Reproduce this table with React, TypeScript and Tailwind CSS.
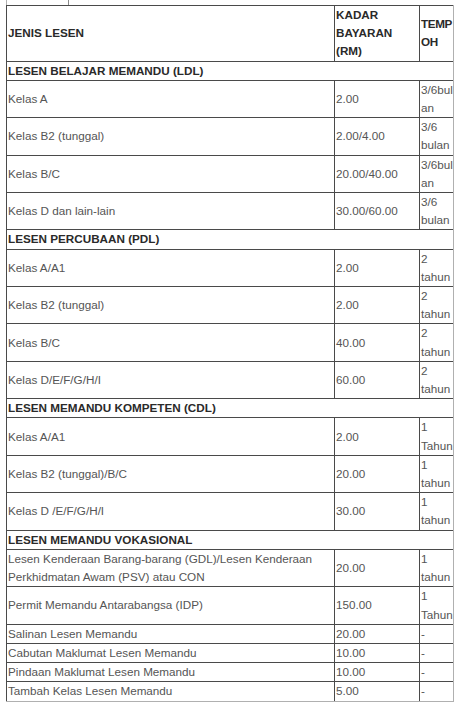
import React from "react";

type Row =
  | { kind: "section"; title: string }
  | { kind: "item"; name: React.ReactNode; fee: string; period: string[] };

const ROWS: Row[] = [
  { kind: "section", title: "LESEN BELAJAR MEMANDU (LDL)" },
  { kind: "item", name: "Kelas A", fee: "2.00", period: ["3/6bul", "an"] },
  { kind: "item", name: "Kelas B2 (tunggal)", fee: "2.00/4.00", period: ["3/6", "bulan"] },
  { kind: "item", name: "Kelas B/C", fee: "20.00/40.00", period: ["3/6bul", "an"] },
  { kind: "item", name: "Kelas D dan lain-lain", fee: "30.00/60.00", period: ["3/6", "bulan"] },
  { kind: "section", title: "LESEN PERCUBAAN (PDL)" },
  { kind: "item", name: "Kelas A/A1", fee: "2.00", period: ["2", "tahun"] },
  { kind: "item", name: "Kelas B2 (tunggal)", fee: "2.00", period: ["2", "tahun"] },
  { kind: "item", name: "Kelas B/C", fee: "40.00", period: ["2", "tahun"] },
  { kind: "item", name: "Kelas D/E/F/G/H/I", fee: "60.00", period: ["2", "tahun"] },
  { kind: "section", title: "LESEN MEMANDU KOMPETEN (CDL)" },
  { kind: "item", name: "Kelas A/A1", fee: "2.00", period: ["1", "Tahun"] },
  { kind: "item", name: "Kelas B2 (tunggal)/B/C", fee: "20.00", period: ["1", "tahun"] },
  { kind: "item", name: "Kelas D /E/F/G/H/I", fee: "30.00", period: ["1", "tahun"] },
  { kind: "section", title: "LESEN MEMANDU VOKASIONAL" },
  {
    kind: "item",
    name: (
      <>
        Lesen Kenderaan Barang-barang (GDL)/Lesen Kenderaan
        <br />
        Perkhidmatan Awam (PSV) atau CON
      </>
    ),
    fee: "20.00",
    period: ["1", "tahun"],
  },
  { kind: "item", name: "Permit Memandu Antarabangsa (IDP)", fee: "150.00", period: ["1", "Tahun"] },
  { kind: "item", name: "Salinan Lesen Memandu", fee: "20.00", period: ["-"] },
  { kind: "item", name: "Cabutan Maklumat Lesen Memandu", fee: "10.00", period: ["-"] },
  { kind: "item", name: "Pindaan Maklumat Lesen Memandu", fee: "10.00", period: ["-"] },
  { kind: "item", name: "Tambah Kelas Lesen Memandu", fee: "5.00", period: ["-"] },
];

const cell = "border-t border-l border-[#4a4a4a] pl-px pr-0 py-0 align-middle";

export default function App() {
  return (
    <div
      className="w-[474px] h-[715px] bg-white text-[11.7px] leading-[18.2px] text-[#555]"
      style={{ fontFamily: '"Liberation Sans", Arial, sans-serif' }}
    >
      {/* tail of the previous table */}
      <div className="ml-[6px] h-[5px] w-[63px] border-l border-r border-l-[#b0b0b0] border-r-[#8a8a8a]" />

      <table className="ml-[6px] w-[448px] table-fixed border-separate border-spacing-0 border-r border-b border-[#b0b0b0]">
        <colgroup>
          <col className="w-[328px]" />
          <col className="w-[85px]" />
          <col className="w-[34px]" />
        </colgroup>
        <thead>
          <tr className="font-bold text-[#2a2a2a] text-left">
            <th className={cell}>JENIS LESEN</th>
            <th className={cell}>
              KADAR
              <br />
              BAYARAN
              <br />
              (RM)
            </th>
            <th className={cell + " whitespace-nowrap tracking-[-0.4px]"}>
              TEMP
              <br />
              OH
            </th>
          </tr>
        </thead>
        <tbody>
          {ROWS.map((r, i) =>
            r.kind === "section" ? (
              <tr key={i}>
                <td colSpan={3} className={cell + " font-bold text-[#2a2a2a]"}>
                  {r.title}
                </td>
              </tr>
            ) : (
              <tr key={i}>
                <td className={cell}>{r.name}</td>
                <td className={cell}>{r.fee}</td>
                <td className={cell + " whitespace-nowrap"}>
                  {r.period.map((p, j) => (
                    <React.Fragment key={j}>
                      {j > 0 && <br />}
                      {p}
                    </React.Fragment>
                  ))}
                </td>
              </tr>
            )
          )}
        </tbody>
      </table>
    </div>
  );
}
